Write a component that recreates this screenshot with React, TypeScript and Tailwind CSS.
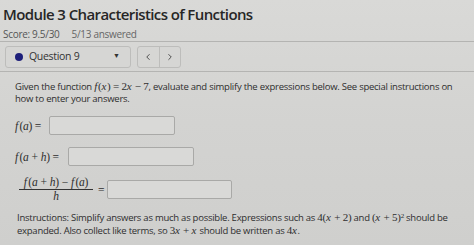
import React from "react";
import { ChevronLeft, ChevronRight } from "lucide-react";

const sans = { fontFamily: '"Open Sans", "Noto Sans", sans-serif' };
const serif = { fontFamily: '"Liberation Serif", "DejaVu Serif", serif' };

function V({ children }: { children: React.ReactNode }) {
  return (
    <i style={serif} className="text-[11px] pr-[1px]">
      {children}
    </i>
  );
}
function N({ children }: { children: React.ReactNode }) {
  return (
    <span style={serif} className="text-[11px]">
      {children}
    </span>
  );
}
function Op({ children }: { children: React.ReactNode }) {
  return (
    <span style={serif} className="text-[11px] px-[2.5px]">
      {children}
    </span>
  );
}
function F() {
  return <i className="pr-[1.5px]">f</i>;
}
function O({ children }: { children: React.ReactNode }) {
  return <span className="px-[3px]">{children}</span>;
}

export default function App() {
  return (
    <div
      className="w-[474px] h-[245px] overflow-hidden bg-gradient-to-b from-[#d9d9d7] via-[#d3d3d1] to-[#cfcfcd] text-[#2b2b2b]"
      style={sans}
    >
      <div className="px-[3px] pt-[3px] border-b border-[#b4b4b2] h-[42px]">
        <div className="text-[15px] leading-[22px] font-semibold tracking-[-0.6px] text-[#262626]">
          Module 3 Characteristics of Functions
        </div>
        <div className="text-[10px] leading-[12px] mt-[3px] text-[#555] flex gap-[12px] tracking-[-0.3px]">
          <span>Score: 9.5/30</span>
          <span className="text-[#666]">5/13 answered</span>
        </div>
      </div>
      <div className="h-[30px] border-b border-[#b4b4b2] flex items-center px-[5px] gap-[6px]">
        <div className="w-[126px] h-[22px] border border-[#bdbdbb] rounded-[3px] bg-[#d6d6d4] flex items-center px-[9px]">
          <span className="w-[8px] h-[8px] rounded-full bg-[#1e1f7a]"></span>
          <span className="ml-[6px] text-[10.5px] text-[#333] tracking-[-0.3px]">Question 9</span>
          <span className="ml-auto text-[7px] text-[#333] pr-[1px]">▼</span>
        </div>
        <div className="w-[44px] h-[22px] border border-[#bdbdbb] rounded-[3px] bg-[#d6d6d4] flex">
          <div className="flex-1 flex items-center justify-center border-r border-[#bdbdbb] text-[#444]">
            <ChevronLeft size={10} strokeWidth={2.2} />
          </div>
          <div className="flex-1 flex items-center justify-center text-[#444]">
            <ChevronRight size={10} strokeWidth={2.2} />
          </div>
        </div>
      </div>
      <div className="pl-[15px] pr-[8px] pt-[8px] text-[9.5px] leading-[12px] text-[#2e2e2e] tracking-[-0.25px]">
        <p>
          Given the function <V>f</V>
          <N>(</N>
          <V>x</V>
          <N>)</N>
          <Op>=</Op>
          <N>2</N>
          <V>x</V>
          <Op>−</Op>
          <N>7</N>, evaluate and simplify the expressions below. See special instructions on how to enter your answers.
        </p>
        <div className="mt-[11px] flex items-center h-[19px] text-[11.5px]">
          <span style={serif} className="w-[34px] whitespace-nowrap">
            <F />(<i>a</i>) =
          </span>
          <div className="w-[126px] h-[19px] border border-[#a9a9a7] rounded-[2px] bg-[#d9d9d7]"></div>
        </div>
        <div className="mt-[12px] flex items-center h-[19px] text-[11.5px]">
          <span style={serif} className="w-[53px] whitespace-nowrap">
            <F />(<i>a</i>
            <O>+</O>
            <i>h</i>) =
          </span>
          <div className="w-[126px] h-[19px] border border-[#a9a9a7] rounded-[2px] bg-[#d9d9d7]"></div>
        </div>
        <div className="mt-[10px] flex items-center text-[11.5px]">
          <div style={serif} className="ml-[4px] flex flex-col items-center">
            <span className="leading-[13px] whitespace-nowrap">
              <F />(<i>a</i>
              <O>+</O>
              <i>h</i>)<O>−</O>
              <F />(<i>a</i>)
            </span>
            <span className="w-[74px] border-t border-[#333]"></span>
            <i className="leading-[13px]">h</i>
          </div>
          <span style={serif} className="ml-[5px] mr-[3px]">=</span>
          <div className="w-[125px] h-[19px] border border-[#a9a9a7] rounded-[2px] bg-[#d9d9d7]"></div>
        </div>
        <p className="mt-[8px] pl-[2px] text-[9.5px] leading-[12px]">
          Instructions: Simplify answers as much as possible. Expressions such as <N>4(</N>
          <V>x</V>
          <Op>+</Op>
          <N>2)</N> and <N>(</N>
          <V>x</V>
          <Op>+</Op>
          <N>5)</N>
          <sup style={serif} className="text-[7px]">2</sup> should be expanded. Also collect like terms, so <N>3</N>
          <V>x</V>
          <Op>+</Op>
          <V>x</V> should be written as <N>4</N>
          <V>x</V>.
        </p>
      </div>
    </div>
  );
}
